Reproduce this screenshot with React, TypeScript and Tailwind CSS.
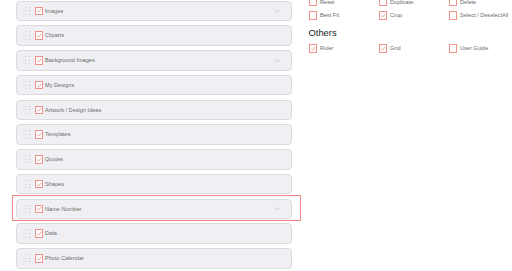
import React from "react";

const ITEMS = [
  { label: "Images", chevron: true },
  { label: "Cliparts" },
  { label: "Background Images", chevron: true },
  { label: "My Designs" },
  { label: "Artwork / Design Ideas" },
  { label: "Templates" },
  { label: "Quotes" },
  { label: "Shapes" },
  { label: "Name Number", chevron: true, highlight: true },
  { label: "Data" },
  { label: "Photo Calendar" },
];

const TOOLS = [
  [
    { label: "Reset" },
    { label: "Duplicate" },
    { label: "Delete" },
  ],
  [
    { label: "Best Fit" },
    { label: "Crop", checked: true },
    { label: "Select / DeselectAll" },
  ],
];

const OTHERS = [
  { label: "Ruler", checked: true },
  { label: "Grid", checked: true },
  { label: "User Guide" },
];

function Box({ checked }: { checked?: boolean }) {
  return (
    <span className="flex h-[8.5px] w-[8.5px] shrink-0 items-center justify-center border border-[#f0928a] bg-white">
      {checked && (
        <svg viewBox="0 0 10 10" className="h-[7px] w-[7px]">
          <polyline points="2,5.4 4,7.3 8,2.8" fill="none" stroke="#e8584c" strokeWidth="0.9" />
        </svg>
      )}
    </span>
  );
}

function Handle() {
  return (
    <span className="grid w-[6px] grid-cols-2 gap-x-[3px] gap-y-[2.6px]">
      {Array.from({ length: 6 }).map((_, i) => (
        <span key={i} className="h-[1px] w-[1px] bg-[#c4c4c8]" />
      ))}
    </span>
  );
}

function Row({ label, chevron }: { label: string; chevron?: boolean }) {
  return (
    <div className="flex h-[20.5px] items-center rounded-[4px] border border-[#dadadf] bg-[#f0f0f4] pl-[8px] pr-[11px]">
      <Handle />
      <span className="ml-[4px]">
        <Box checked />
      </span>
      <span className="ml-[2px] text-[5.6px] text-[#6b6b6b]">{label}</span>
      {chevron && (
        <svg viewBox="0 0 8 4" className="ml-auto h-[3.5px] w-[6.5px]">
          <polyline points="0.5,0.5 4,3.4 7.5,0.5" fill="none" stroke="#b4b4ba" strokeWidth="0.7" />
        </svg>
      )}
    </div>
  );
}

function Opt({ label, checked }: { label: string; checked?: boolean }) {
  return (
    <div className="flex h-[9px] items-center gap-[3px]">
      <Box checked={checked} />
      <span className="whitespace-nowrap text-[5.6px] text-[#6b6b6b]">{label}</span>
    </div>
  );
}

export default function App() {
  return (
    <div className="flex h-[271px] w-[512px] overflow-hidden bg-white font-['Liberation_Sans',Arial,sans-serif]">
      <div className="ml-[15.5px] mt-[0.5px] flex w-[276.5px] shrink-0 flex-col gap-[4.25px]">
        {ITEMS.map((it) =>
          it.highlight ? (
            <div key={it.label} className="relative">
              <div className="pointer-events-none absolute -left-[3.5px] -right-[8.5px] -top-[4px] -bottom-[1.5px] border border-[#f28b86]" />
              <Row label={it.label} chevron={it.chevron} />
            </div>
          ) : (
            <Row key={it.label} label={it.label} chevron={it.chevron} />
          )
        )}
      </div>

      <div className="ml-[16.5px] -mt-[2.5px] flex shrink-0 flex-col">
        <div className="flex flex-col gap-[4.5px]">
          {TOOLS.map((row, r) => (
            <div key={r} className="grid grid-cols-[70px_70px_70px]">
              {row.map((o) => (
                <Opt key={o.label} label={o.label} checked={o.checked} />
              ))}
            </div>
          ))}
        </div>
        <h3 className="mt-[7px] text-[9.4px] font-medium leading-[12px] text-[#222]">Others</h3>
        <div className="mt-[5px] grid grid-cols-[70px_70px_70px]">
          {OTHERS.map((o) => (
            <Opt key={o.label} label={o.label} checked={o.checked} />
          ))}
        </div>
      </div>
    </div>
  );
}
